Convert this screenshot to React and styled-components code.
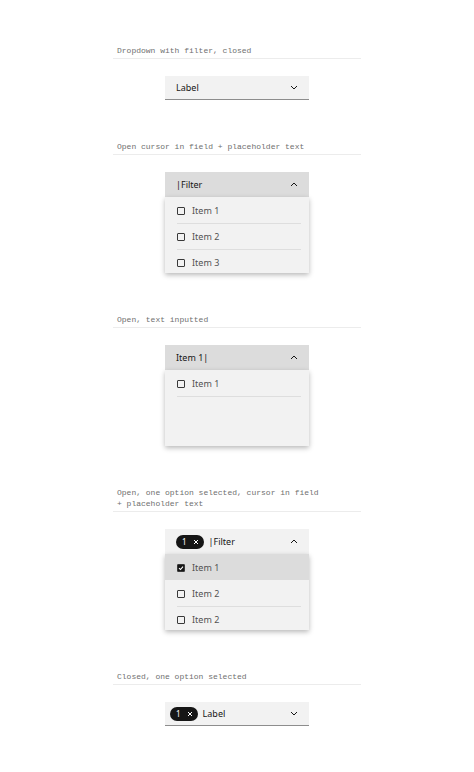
import styled, { createGlobalStyle } from "styled-components";

const GlobalStyle = createGlobalStyle`
  body {
    margin: 0;
    background: #fff;
    font-family: "Noto Sans", sans-serif;
  }
`;

function Chevron({ up }) {
  return (
    <ChevronSvg viewBox="0 0 8 5" $up={up}>
      <polyline points="1,1 4,4 7,1" fill="none" stroke="#161616" strokeWidth="1" />
    </ChevronSvg>
  );
}

function Check() {
  return (
    <svg width="6" height="6" viewBox="0 0 6 6">
      <polyline points="1,3.2 2.5,4.5 5,1.6" fill="none" stroke="#fff" strokeWidth="1.1" />
    </svg>
  );
}

function Tag() {
  return (
    <StTag>
      1
      <svg width="6" height="6" viewBox="0 0 6 6">
        <path d="M1 1 L5 5 M5 1 L1 5" stroke="#fff" strokeWidth="1" />
      </svg>
    </StTag>
  );
}

// an item without a label is only the divider line left under the last match
function Menu({ items }) {
  return (
    <StMenu>
      {items.map((item, i) => (
        <MenuItem key={i} $selected={item.checked}>
          <ItemInner $divider={i > 0 && !items[i - 1].checked && !item.checked}>
            {item.label && (
              <>
                <Box $checked={item.checked}>{item.checked && <Check />}</Box>
                <ItemText>{item.label}</ItemText>
              </>
            )}
          </ItemInner>
        </MenuItem>
      ))}
    </StMenu>
  );
}

export default function App() {
  const threeItems = [{ label: "Item 1" }, { label: "Item 2" }, { label: "Item 3" }];
  const selectedItems = [{ label: "Item 1", checked: true }, { label: "Item 2" }, { label: "Item 2" }];

  return (
    <Page>
      <GlobalStyle />

      <Section>
        <Caption>Dropdown with filter, closed</Caption>
        <Dropdown>
          <Field>
            <FieldText>Label</FieldText>
            <Chevron />
          </Field>
        </Dropdown>
      </Section>

      <Section>
        <Caption>Open cursor in field + placeholder text</Caption>
        <Dropdown>
          <Field $open>
            <FieldText>|Filter</FieldText>
            <Chevron up />
          </Field>
          <Menu items={threeItems} />
        </Dropdown>
      </Section>

      <Section>
        <Caption>Open, text inputted</Caption>
        <Dropdown>
          <Field $open>
            <FieldText>Item 1|</FieldText>
            <Chevron up />
          </Field>
          <Menu items={[{ label: "Item 1" }, { label: "" }]} />
        </Dropdown>
      </Section>

      <Section>
        <Caption>
          Open, one option selected, cursor in field
          <br />+ placeholder text
        </Caption>
        <Dropdown>
          <Field $flat>
            <Tag />
            <FieldText $gap={5}>|Filter</FieldText>
            <Chevron up />
          </Field>
          <Menu items={selectedItems} />
        </Dropdown>
      </Section>

      <Section>
        <Caption>Closed, one option selected</Caption>
        <Dropdown>
          <Field $pad={5}>
            <Tag />
            <FieldText $gap={5}>Label</FieldText>
            <Chevron />
          </Field>
        </Dropdown>
      </Section>
    </Page>
  );
}

const Page = styled.div`
  display: flex;
  flex-direction: column;
  align-items: center;
  gap: 41px;
  padding-top: 45px;
`;

const Section = styled.section`
  width: 248px;
  display: flex;
  flex-direction: column;
`;

const Caption = styled.div`
  padding: 0 4px 2px;
  font-family: "Liberation Mono", monospace;
  font-size: 8px;
  line-height: 11px;
  color: #6f6f6f;
  border-bottom: 1px solid #ececec;
`;

const Dropdown = styled.div`
  width: 144px;
  margin: 17px auto 0;
`;

const Field = styled.div`
  box-sizing: border-box;
  height: ${(p) => (p.$open || p.$flat ? 25 : 24)}px;
  display: flex;
  align-items: center;
  padding: 0 11px 0 ${(p) => p.$pad ?? 11}px;
  background: ${(p) => (p.$open ? "#dcdcdc" : "#f2f2f2")};
  border-bottom: ${(p) => (p.$open || p.$flat ? "none" : "1px solid #8d8d8d")};
`;

const FieldText = styled.span`
  flex: 1;
  margin-left: ${(p) => p.$gap ?? 0}px;
  font-size: 9px;
  color: #161616;
  white-space: pre;
`;

const ChevronSvg = styled.svg`
  width: 8px;
  height: 5px;
  transform: ${(p) => (p.$up ? "rotate(180deg)" : "none")};
`;

const StTag = styled.span`
  display: inline-flex;
  align-items: center;
  gap: 6px;
  height: 14px;
  padding: 0 5px 0 6px;
  border-radius: 7px;
  background: #161616;
  color: #fff;
  font-size: 8px;
`;

const StMenu = styled.div`
  height: 76px;
  overflow: hidden;
  background: #f2f2f2;
  box-shadow: 0 2px 5px rgba(0, 0, 0, 0.28);
`;

const MenuItem = styled.div`
  height: 26px;
  padding: 0 8px 0 12px;
  background: ${(p) => (p.$selected ? "#dcdcdc" : "transparent")};
`;

const ItemInner = styled.div`
  box-sizing: border-box;
  height: 26px;
  display: flex;
  align-items: center;
  gap: 7px;
  border-top: 1px solid ${(p) => (p.$divider ? "#dedede" : "transparent")};
`;

const Box = styled.span`
  box-sizing: border-box;
  width: 8px;
  height: 8px;
  display: flex;
  align-items: center;
  justify-content: center;
  border: 1px solid #393939;
  border-radius: 1px;
  background: ${(p) => (p.$checked ? "#161616" : "transparent")};
`;

const ItemText = styled.span`
  font-size: 9px;
  color: #525252;
`;
